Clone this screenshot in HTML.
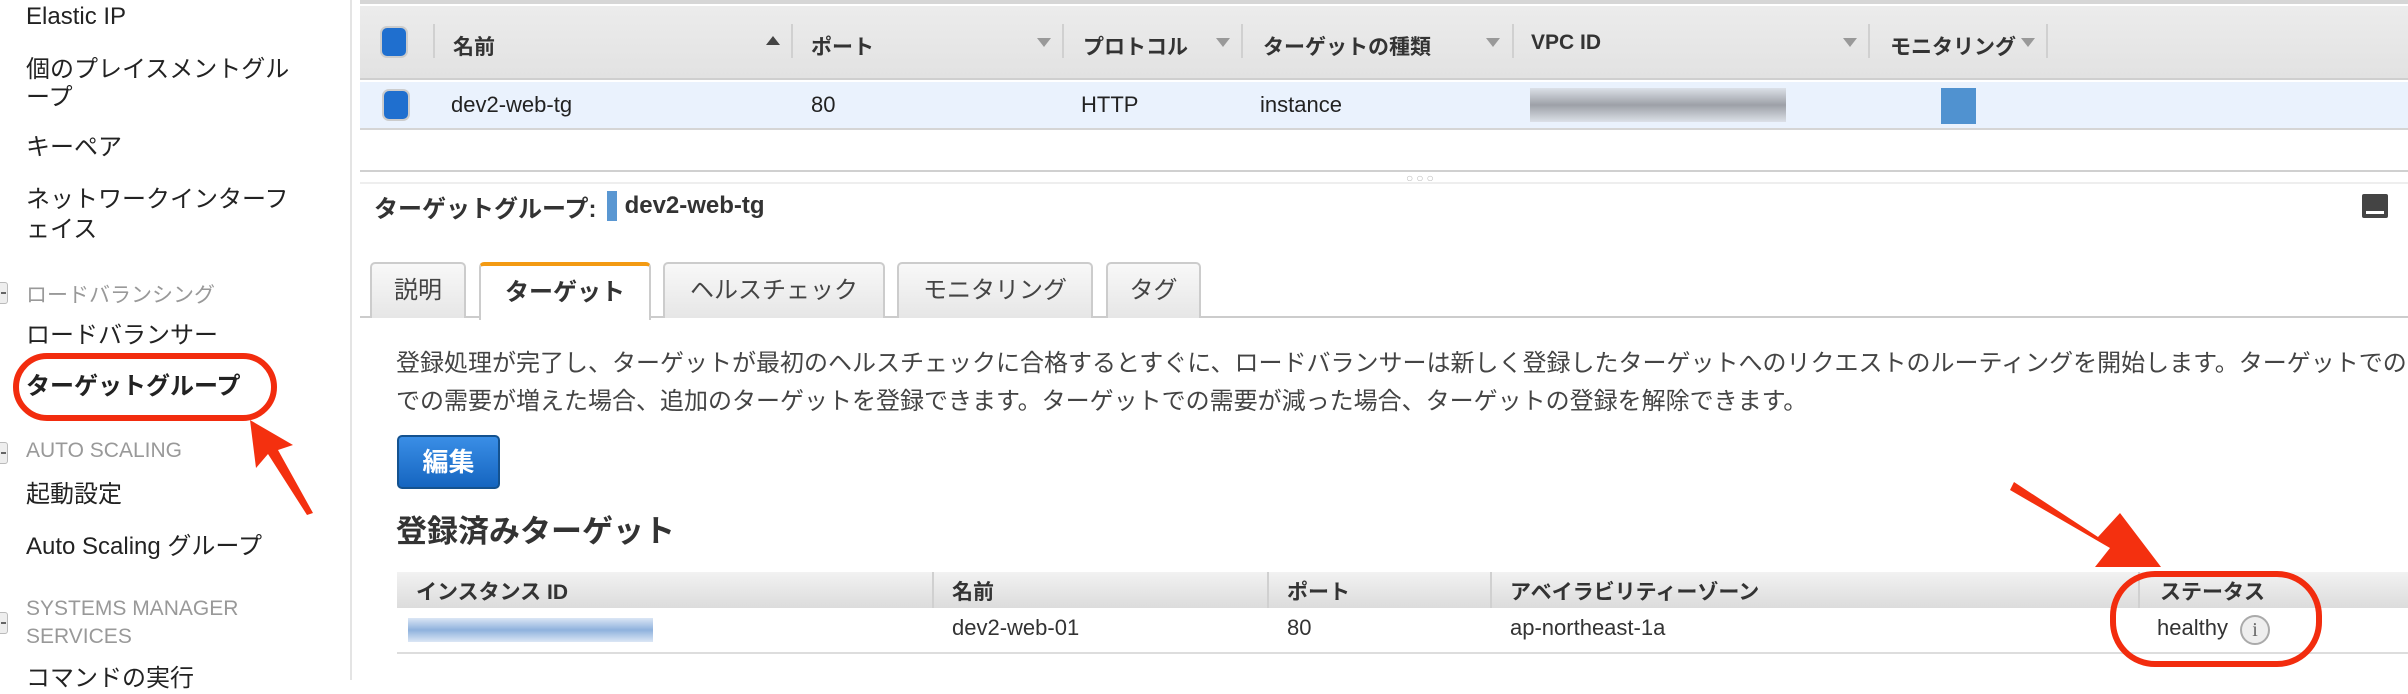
<!DOCTYPE html>
<html><head><meta charset="utf-8"><style>
*{margin:0;padding:0;box-sizing:border-box}
body{width:2408px;height:680px;overflow:hidden;background:#fff;font-family:"Liberation Sans","Noto Sans CJK JP",sans-serif;color:#333;position:relative}
.a{position:absolute;white-space:nowrap}
.sb{font-size:24px;color:#222;left:26px;line-height:30px}
.sec{font-size:21px;color:#999;left:26px}
.mbox{position:absolute;left:-6px;width:14px;height:22px;border:1px solid #bbb;background:#eee;border-radius:3px}
.mbox:after{content:"";position:absolute;left:6px;top:9px;width:5px;height:2px;background:#666}
.th{font-size:21px;font-weight:bold;color:#333;top:31px}
.dv{position:absolute;top:24px;width:2px;height:34px;background:#d0d0d0}
.tri{position:absolute;top:38px;width:0;height:0;border-left:7px solid transparent;border-right:7px solid transparent;border-top:9px solid #999}
.td{font-size:22px;color:#222;top:92px}
.tab{position:absolute;top:262px;height:56px;border:2px solid #ccc;border-bottom:none;border-radius:5px 5px 0 0;background:linear-gradient(#f8f8f8,#e6e6e6);font-size:24px;color:#444;text-align:center;line-height:54px}
.p{font-size:24px;color:#444;left:396px}
.h2{font-size:21px;font-weight:bold;color:#333;top:576px}
.r2{font-size:22px;color:#333;top:615px}
</style></head><body>
<div class="a" style="left:350px;top:0;width:2px;height:680px;background:#e4e4e4"></div>
<div class="a sb" style="top:2px">Elastic IP</div>
<div class="a sb" style="top:55px">個のプレイスメントグル</div>
<div class="a sb" style="top:83px">ープ</div>
<div class="a sb" style="top:133px">キーペア</div>
<div class="a sb" style="top:185px">ネットワークインターフ</div>
<div class="a sb" style="top:215px">ェイス</div>
<div class="mbox" style="top:282px"></div>
<div class="a sec" style="top:279px">ロードバランシング</div>
<div class="a sb" style="top:321px">ロードバランサー</div>
<div class="a sb" style="top:372px;font-weight:bold">ターゲットグループ</div>
<div class="mbox" style="top:442px"></div>
<div class="a sec" style="top:439px">AUTO SCALING</div>
<div class="a sb" style="top:480px">起動設定</div>
<div class="a sb" style="top:532px">Auto Scaling グループ</div>
<div class="mbox" style="top:612px"></div>
<div class="a sec" style="top:597px">SYSTEMS MANAGER</div>
<div class="a sec" style="top:625px">SERVICES</div>
<div class="a sb" style="top:664px">コマンドの実行</div>

<div class="a" style="left:360px;top:0;width:2048px;height:4px;background:#d6d6d6"></div>
<div class="a" style="left:360px;top:6px;width:2048px;height:74px;background:linear-gradient(#ececec,#e2e2e2);border-bottom:2px solid #cfcfcf"></div>
<div class="a" style="left:380px;top:26px;width:28px;height:32px;border-radius:7px;background:#1f6fcf;border:2px solid #ccc"></div>
<div class="dv" style="left:433px"></div>
<div class="a th" style="left:453px">名前</div>
<div class="a" style="left:766px;top:36px;border-left:7px solid transparent;border-right:7px solid transparent;border-bottom:9px solid #444"></div>
<div class="dv" style="left:791px"></div>
<div class="a th" style="left:811px">ポート</div><div class="tri" style="left:1037px"></div>
<div class="dv" style="left:1062px"></div>
<div class="a th" style="left:1083px">プロトコル</div><div class="tri" style="left:1216px"></div>
<div class="dv" style="left:1241px"></div>
<div class="a th" style="left:1263px">ターゲットの種類</div><div class="tri" style="left:1486px"></div>
<div class="dv" style="left:1512px"></div>
<div class="a th" style="left:1531px">VPC ID</div><div class="tri" style="left:1843px"></div>
<div class="dv" style="left:1868px"></div>
<div class="a th" style="left:1890px">モニタリング</div><div class="tri" style="left:2021px"></div>
<div class="dv" style="left:2046px"></div>
<div class="a" style="left:360px;top:82px;width:2048px;height:48px;background:#eaf2fd;border-bottom:2px solid #d5d5d5"></div>
<div class="a" style="left:382px;top:89px;width:28px;height:32px;border-radius:7px;background:#1f6fcf;border:2px solid #ccc"></div>
<div class="a td" style="left:451px">dev2-web-tg</div>
<div class="a td" style="left:811px">80</div>
<div class="a td" style="left:1081px">HTTP</div>
<div class="a td" style="left:1260px">instance</div>
<div class="a" style="left:1530px;top:88px;width:256px;height:34px;background:linear-gradient(#d8dce2,#8a8c92 50%,#d8dce2);opacity:.8"></div>
<div class="a" style="left:1941px;top:88px;width:35px;height:36px;background:#5092d0"></div>
<div class="a" style="left:360px;top:170px;width:2048px;height:2px;background:#d0d0d0"></div>
<div class="a" style="left:360px;top:182px;width:2048px;height:2px;background:#eee"></div>
<div class="a" style="left:1406px;top:171px;font-size:12px;color:#bbb;letter-spacing:3px">○○○</div>

<div class="a" style="left:374px;top:190px;height:32px;display:flex;align-items:center;font-size:24px;font-weight:bold;color:#333">
<span>ターゲットグループ:</span><span style="display:inline-block;width:10px;height:30px;background:#5a97d2;margin:0 8px 0 10px"></span><span>dev2-web-tg</span></div>
<div class="a" style="left:2362px;top:194px;width:26px;height:24px;background:#444;border-radius:2px"><div style="position:absolute;left:4px;bottom:4px;width:18px;height:3px;background:#fff"></div></div>

<div class="a" style="left:360px;top:316px;width:2048px;height:2px;background:#ccc"></div>
<div class="tab" style="left:370px;width:96px">説明</div>
<div class="tab" style="left:479px;width:172px;background:#fff;border-top:4px solid #f39a12;height:58px;font-weight:bold;color:#333">ターゲット</div>
<div class="tab" style="left:663px;width:222px">ヘルスチェック</div>
<div class="tab" style="left:897px;width:196px">モニタリング</div>
<div class="tab" style="left:1106px;width:95px">タグ</div>

<div class="a p" style="top:343px">登録処理が完了し、ターゲットが最初のヘルスチェックに合格するとすぐに、ロードバランサーは新しく登録したターゲットへのリクエストのルーティングを開始します。ターゲットでの</div>
<div class="a p" style="top:381px">での需要が増えた場合、追加のターゲットを登録できます。ターゲットでの需要が減った場合、ターゲットの登録を解除できます。</div>
<div class="a" style="left:397px;top:435px;width:103px;height:54px;border-radius:5px;background:linear-gradient(#3a8ee6,#1565c0);border:2px solid #14528f;color:#fff;font-weight:bold;font-size:26px;text-align:center;line-height:50px">編集</div>
<div class="a" style="left:396px;top:506px;font-size:31px;font-weight:bold;color:#333">登録済みターゲット</div>

<div class="a" style="left:397px;top:572px;width:2011px;height:36px;background:linear-gradient(#f2f2f2,#dcdcdc)"></div>
<div class="a" style="left:932px;top:572px;width:2px;height:36px;background:#d0d0d0"></div>
<div class="a" style="left:1267px;top:572px;width:2px;height:36px;background:#d0d0d0"></div>
<div class="a" style="left:1490px;top:572px;width:2px;height:36px;background:#d0d0d0"></div>
<div class="a" style="left:2138px;top:572px;width:2px;height:36px;background:#d0d0d0"></div>
<div class="a h2" style="left:416px">インスタンス ID</div>
<div class="a h2" style="left:952px">名前</div>
<div class="a h2" style="left:1287px">ポート</div>
<div class="a h2" style="left:1510px">アベイラビリティーゾーン</div>
<div class="a h2" style="left:2160px">ステータス</div>
<div class="a" style="left:408px;top:618px;width:245px;height:24px;background:linear-gradient(#dbe6f5,#8fb2dd 50%,#dbe6f5)"></div>
<div class="a r2" style="left:952px">dev2-web-01</div>
<div class="a r2" style="left:1287px">80</div>
<div class="a r2" style="left:1510px">ap-northeast-1a</div>
<div class="a r2" style="left:2157px">healthy</div>
<div class="a" style="left:2240px;top:615px;width:30px;height:30px;border-radius:50%;border:2px solid #aaa;background:#eee;color:#666;font-size:20px;text-align:center;line-height:26px;font-family:'Liberation Serif',serif">i</div>
<div class="a" style="left:397px;top:652px;width:2011px;height:2px;background:#ddd"></div>

<svg class="a" style="left:0;top:0" width="2408" height="680">
<rect x="16" y="356" width="258" height="62" rx="31" fill="none" stroke="#f22c0e" stroke-width="6"/>
<polygon points="250,420 293,445 278,450 313,513 307,515 268,454 256,468" fill="#f4300f"/>
<rect x="2113" y="574" width="206" height="90" rx="42" fill="none" stroke="#f22c0e" stroke-width="6"/>
<polygon points="2010,490 2014,482 2098,537 2120,513 2161,567 2095,567 2110,548" fill="#f4300f"/>
</svg>
</body></html>
